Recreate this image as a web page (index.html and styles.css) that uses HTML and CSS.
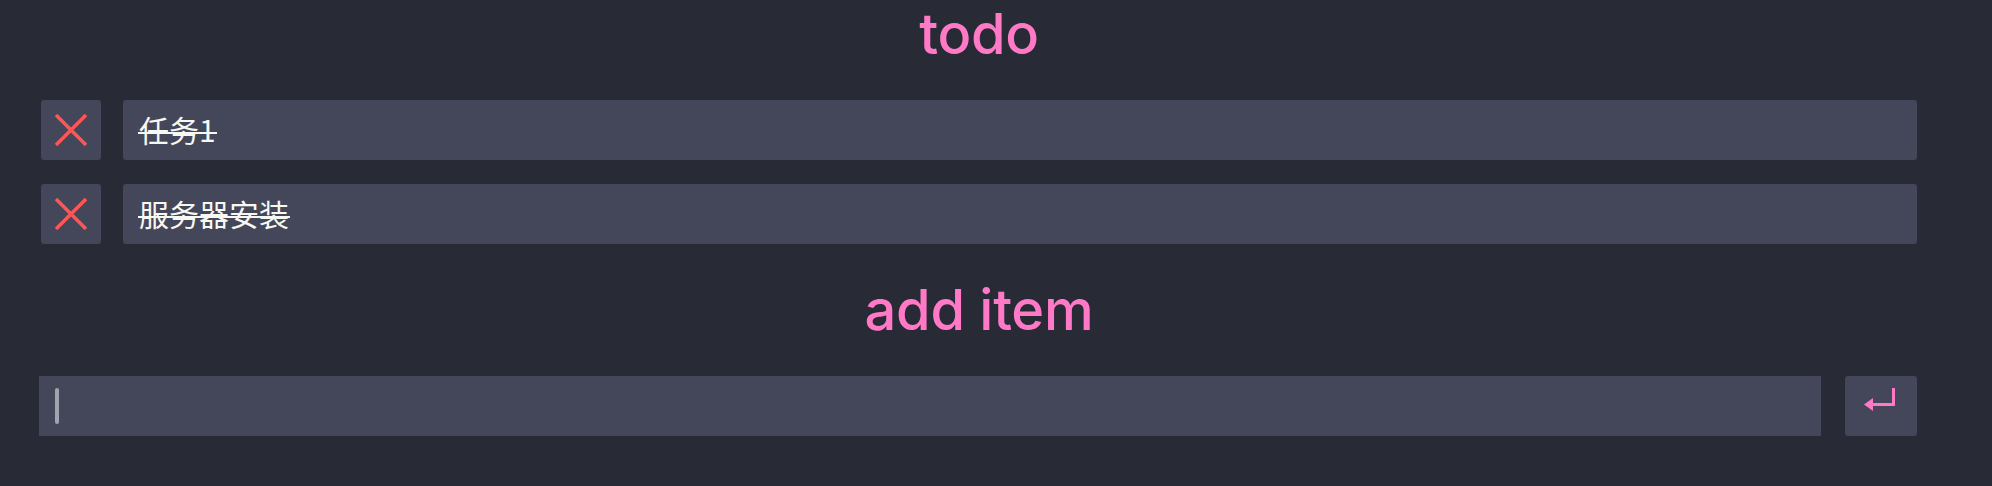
FILE: index.html
```html
<!DOCTYPE html>
<html lang="zh">
<head>
<meta charset="utf-8">
<title>todo</title>
<link rel="stylesheet" href="styles.css">
</head>
<body>
<div class="app">
  <h1 class="title">todo</h1>
  <ul class="list">
    <li class="item">
      <button class="del" type="button" aria-label="delete">
        <svg width="60" height="60" viewBox="0 0 60 60"><path d="M15 15L45 45M45 15L15 45" stroke="#ff5555" stroke-width="3.5" fill="none"/></svg>
      </button>
      <div class="text"><span class="done">任务1</span></div>
    </li>
    <li class="item">
      <button class="del" type="button" aria-label="delete">
        <svg width="60" height="60" viewBox="0 0 60 60"><path d="M15 15L45 45M45 15L15 45" stroke="#ff5555" stroke-width="3.5" fill="none"/></svg>
      </button>
      <div class="text"><span class="done">服务器安装</span></div>
    </li>
  </ul>
  <h2 class="title">add item</h2>
  <div class="add">
    <div class="field">
      <input class="input" type="text" aria-label="new item">
      <span class="caret"></span>
    </div>
    <button class="enter" type="button" aria-label="add">
      <svg width="72" height="60" viewBox="0 0 72 60"><path d="M48.5 12V28.5H27" stroke="#ff79c6" stroke-width="3" fill="none"/><polygon points="19,28.5 28,22 28,35" fill="#ff79c6"/></svg>
    </button>
  </div>
</div>
</body>
</html>
```
FILE: styles.css
```css
html, body {
  margin: 0;
  padding: 0;
  background: #282a36;
}
body {
  width: 1992px;
  height: 486px;
  overflow: hidden;
  font-family: Inter, "Noto Sans CJK SC", sans-serif;
}
.app {
  padding: 0 75px 0 41px;
}
.title {
  margin: 0;
  font-size: 56px;
  line-height: 68px;
  font-weight: 500;
  color: #ff79c6;
  text-align: center;
  letter-spacing: -0.3px;
}
h2.title {
  margin-top: 32px;
  margin-bottom: 32px;
}
.list {
  list-style: none;
  margin: 32px 0 0 0;
  padding: 0;
  display: flex;
  flex-direction: column;
  gap: 24px;
}
.item {
  display: flex;
  gap: 22px;
  height: 60px;
}
.del, .enter {
  padding: 0;
  border: 0;
  background: #44475a;
  border-radius: 3px;
  height: 60px;
  display: block;
}
.del { width: 60px; flex: none; }
.del svg, .enter svg { display: block; }
.text {
  flex: 1;
  box-sizing: border-box;
  background: #44475a;
  border-radius: 3px;
  padding: 0 16px 3px 16px;
  display: flex;
  align-items: center;
  font-family: "Noto Sans CJK SC", sans-serif;
  font-size: 30px;
  line-height: 36px;
  color: #f8f8f2;
}
.done {
  position: relative;
}
.done::after {
  content: "";
  position: absolute;
  left: -1px;
  right: -1px;
  top: 21px;
  height: 2px;
  background: #f8f8f2;
}
.add {
  display: flex;
  gap: 24px;
  margin-left: -2px;
}
.field {
  position: relative;
  flex: 1;
  height: 60px;
}
.input {
  box-sizing: border-box;
  width: 100%;
  height: 60px;
  border: 0;
  margin: 0;
  padding: 0 16px;
  background: #44475a;
  color: #f8f8f2;
  font-size: 30px;
  outline: none;
  display: block;
  caret-color: transparent;
}
.caret {
  position: absolute;
  left: 16px;
  top: 12px;
  width: 4px;
  height: 36px;
  border-radius: 2px;
  background: #a2a3ae;
}
.enter { width: 72px; flex: none; }
```
